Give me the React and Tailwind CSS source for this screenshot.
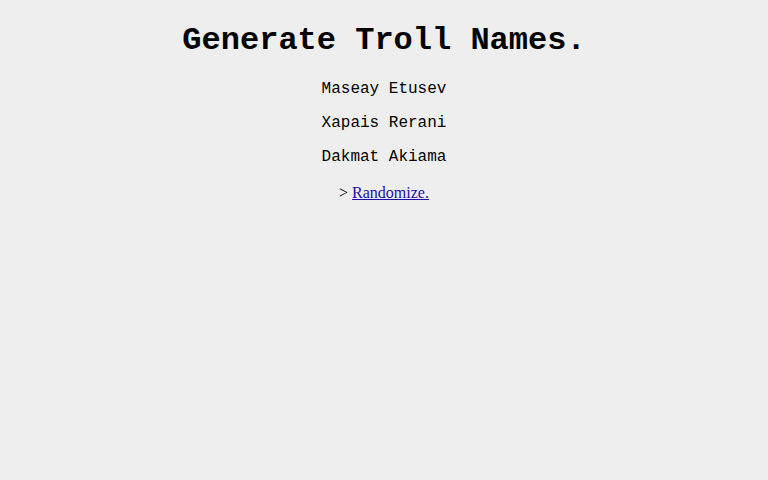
export default function App() {
  const names = ["Maseay Etusev", "Xapais Rerani", "Dakmat Akiama"];

  return (
    <div className="min-h-screen bg-[#eeeeee] text-center text-black leading-[normal]">
      <div className="flow-root">
        <h1 className="mt-[22px] mb-[21px] text-[32px] leading-[normal] font-bold font-['Liberation_Mono',monospace]">
          Generate Troll Names.
        </h1>
        {names.map((name) => (
          <p key={name} className="my-4 text-base leading-[normal] font-['Liberation_Mono',monospace]">
            {name}
          </p>
        ))}
        <p className="mt-[18px] mb-4 text-base leading-[normal] font-['Liberation_Serif',serif]">
          &gt;{" "}
          <a href="#" className="text-[#1a0dab] underline">
            Randomize.
          </a>
        </p>
      </div>
    </div>
  );
}
